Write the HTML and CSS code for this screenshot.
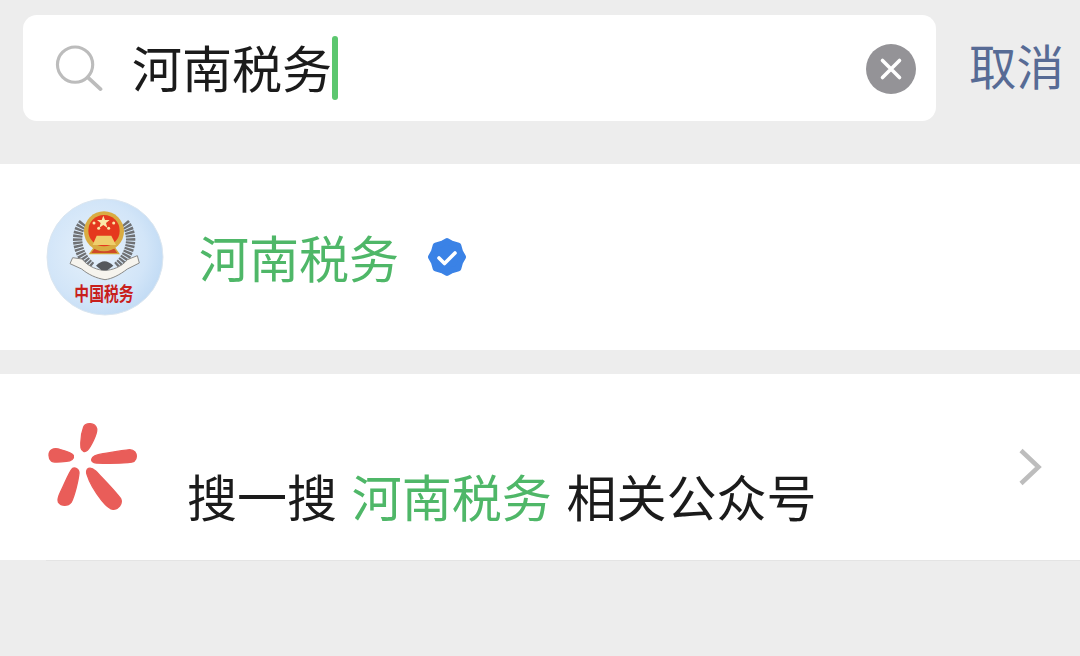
FILE: index.html
```html
<!DOCTYPE html>
<html lang="zh-CN">
<head>
<meta charset="utf-8">
<title>搜索</title>
<link rel="stylesheet" href="styles.css">
</head>
<body>
<header class="search-head">
  <div class="search-box">
    <svg class="search-icon" viewBox="0 0 48 48" aria-hidden="true"><circle cx="20" cy="20" r="18" fill="none" stroke="#bcbcbc" stroke-width="3.2"/><path d="M33 33 L46 45" fill="none" stroke="#bcbcbc" stroke-width="3.800" stroke-linecap="round"/></svg>
    <div class="query"><span class="query-text">河南税务</span><span class="caret"></span></div>
    <svg class="clear" viewBox="0 0 50 50" aria-hidden="true"><circle cx="25" cy="25" r="25" fill="#949397"/><path d="M16.500 16.500 L33.500 33.500 M33.500 16.500 L16.500 33.500" stroke="#fff" stroke-width="3.600" stroke-linecap="round"/></svg>
  </div>
  <div class="cancel">取消</div>
</header>

<section class="row account">
  <svg class="avatar" viewBox="78 55 354 354" role="img" aria-label="中国税务">
    <defs>
      <radialGradient id="sky" cx="42%" cy="45%" r="62%"><stop offset="0" stop-color="#e6f1fb"/><stop offset=".7" stop-color="#d2e5f8"/><stop offset="1" stop-color="#c0daf4"/></radialGradient>
    </defs>
    <circle cx="255" cy="232" r="174" fill="url(#sky)" stroke="#dbe6f0" stroke-width="3"/>
    <path d="M190 130 C160 165 170 225 215 262" fill="none" stroke="#6f7174" stroke-width="28" stroke-dasharray="7 3"/>
    <path d="M314 130 C345 165 335 225 290 262" fill="none" stroke="#6f7174" stroke-width="28" stroke-dasharray="7 3"/>
    <path d="M150 252 L158 234 L186 238 C205 262 235 272 255 272 C275 272 305 262 322 240 L352 228 L358 250 L322 268 C300 285 275 298 255 300 C230 296 205 285 185 268 Z" fill="#f6f4ee" stroke="#8a8a88" stroke-width="3"/>
    <path d="M228 258 C245 240 262 240 280 258 L262 272 L245 272 Z" fill="#55585c"/>
    <path d="M222 205 H284 L296 222 H210 Z" fill="#cf4a28" stroke="#d5a73c" stroke-width="4"/>
    <circle cx="252" cy="155" r="60" fill="#d9ac42"/>
    <circle cx="252" cy="153" r="47" fill="#e5381e"/>
    <path d="M250 108 l5 13 14 0 -11 9 4 14 -12 -8 -12 8 4 -14 -11 -9 14 0z" fill="#fbe9a8"/>
    <circle cx="222" cy="130" r="4.500" fill="#fbe9a8"/><circle cx="281" cy="130" r="4.500" fill="#fbe9a8"/>
    <circle cx="236" cy="146" r="4.500" fill="#fbe9a8"/><circle cx="266" cy="146" r="4.500" fill="#fbe9a8"/>
    <path d="M218 196 L230 168 H274 L288 196 Z" fill="#efce6c"/>
    <text class="avatar-text" x="163" y="364" textLength="178" lengthAdjust="spacingAndGlyphs">中国税务</text>
  </svg>
  <span class="name hl">河南税务</span>
  <svg class="badge" viewBox="-21 -21 42 42" aria-hidden="true"><polygon points="16,0 13,5.400 11.300,11.300 5.400,13 0,16 -5.400,13 -11.300,11.300 -13,5.400 -16,0 -13,-5.400 -11.300,-11.300 -5.400,-13 0,-16 5.400,-13 11.300,-11.300 13,-5.400" fill="#3a82e6" stroke="#3a82e6" stroke-width="6" stroke-linejoin="round"/><path d="M-8 1 L-2.500 6.500 L8 -4" fill="none" stroke="#fff" stroke-width="3.600" stroke-linecap="round" stroke-linejoin="round"/></svg>
</section>

<section class="row more">
  <svg class="star" viewBox="85 68 270 264" aria-hidden="true">
    <g fill="#e95d59" stroke="#e95d59" stroke-width="4" stroke-linejoin="round">
      <path d="M184 143 C182 120 186 95 192 80 C198 66 226 66 231 85 C234 100 212 140 203 150 C196 156 186 154 184 143Z"/>
      <path d="M88 165 C88 150 100 143 115 146 C130 150 155 155 161 165 C164 175 155 182 140 183 C125 185 100 187 95 182 C90 178 88 172 88 165Z"/>
      <path d="M216 177 C218 168 230 163 250 160 C275 156 310 150 330 148 C345 148 350 160 350 168 C350 180 340 187 325 187 C300 189 250 189 230 188 C220 187 215 183 216 177Z"/>
      <path d="M158 205 C165 200 178 205 178 218 C176 240 165 285 155 305 C145 318 125 318 116 305 C112 295 118 285 125 270 C135 250 148 215 158 205Z"/>
      <path d="M203 207 C210 200 220 205 228 212 C245 230 285 270 303 295 C310 310 295 328 280 327 C268 326 258 315 246 300 C232 282 210 248 203 225 C200 218 200 212 203 207Z"/>
    </g>
  </svg>
  <p class="more-text">搜一搜 <span class="hl">河南税务</span> 相关公众号</p>
  <svg class="chevron" viewBox="0 0 24 38" aria-hidden="true"><path d="M3 2.500 L20.500 19 L3 35.500" fill="none" stroke="#bdbdbd" stroke-width="4.500"/></svg>
</section>
<div class="row-line"></div>
</body>
</html>
```
FILE: styles.css
```css
* { box-sizing: border-box; }
html, body { margin: 0; height: 656px; overflow: hidden; }
body {
  background: #ededed;
  color: #1b1b1b;
  font-family: "Noto Sans CJK SC", "Liberation Sans", sans-serif;
}
svg { display: block; flex: none; }

.search-head {
  display: flex;
  align-items: center;
  height: 164px;
  padding: 15px 0 43px 23px;
}
.search-box {
  display: flex;
  flex: none;
  align-items: center;
  width: 913px;
  height: 106px;
  padding: 0 20px 0 32px;
  background: #fff;
  border-radius: 14px;
}
.search-icon { width: 48px; height: 47px; }
.query {
  display: flex;
  align-items: center;
  flex: 1;
  margin-left: 29px;
  font-size: 50px;
  line-height: 64px;
}
.query-text { margin-bottom: 4px; }
.caret {
  width: 5.500px;
  height: 64px;
  border-radius: 3px;
  background: #5cc76f;
}
.clear { width: 50px; height: 50px; margin-top: 1px; }
.cancel {
  margin-left: 33px;
  margin-bottom: 6px;
  color: #576b95;
  font-size: 47.500px;
  line-height: 64px;
  white-space: nowrap;
}

.row {
  display: flex;
  align-items: center;
  height: 186px;
  background: #fff;
}
.account { margin-bottom: 24px; padding-left: 46px; }
.avatar { width: 118px; height: 118px; }
.avatar-text {
  fill: #c8201c;
  font-family: "Noto Sans CJK SC", sans-serif;
  font-size: 58px;
  font-weight: 700;
}
.name {
  margin-left: 35px;
  margin-bottom: 2px;
  font-size: 50px;
  line-height: 64px;
}
.hl { color: #4fb768; }
.badge { width: 42px; height: 42px; margin-left: 27px; }

.more { padding-left: 48px; }
.star { width: 90px; height: 88px; }
.more-text {
  flex: 1;
  align-self: flex-end;
  margin: 0 0 33px 49px;
  font-size: 50px;
  line-height: 64px;
  word-spacing: 3.500px;
  white-space: nowrap;
}
.chevron { width: 24px; height: 38px; margin-right: 38px; }
.row-line { height: 1px; margin-left: 46px; background: #e4e4e4; }
```
